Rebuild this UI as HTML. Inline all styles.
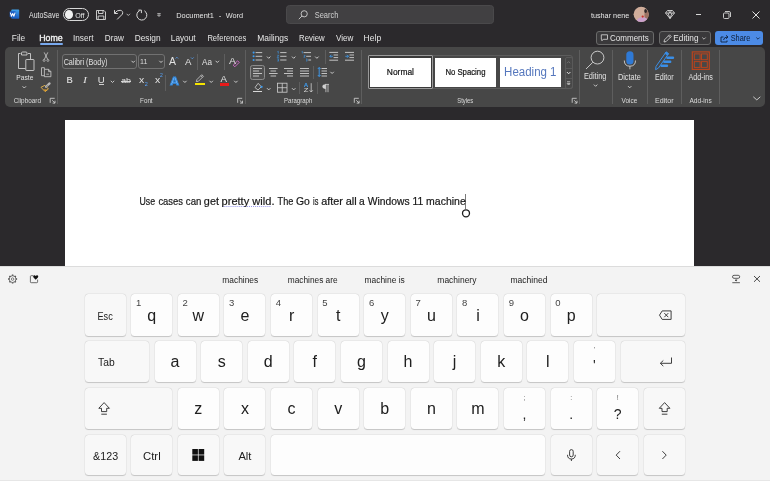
<!DOCTYPE html><html><head><meta charset="utf-8"><style>html,body{margin:0;padding:0;}
body{width:770px;height:481px;overflow:hidden;position:relative;background:#2b292c;font-family:'Liberation Sans', sans-serif;}
svg{display:block;}
</style></head><body>
<div style="position:absolute;left:5px;top:47px;width:760.00px;height:60.00px;background:#474747;border-radius:5px;"></div>
<div style="position:absolute;left:65px;top:120px;width:629.00px;height:146.00px;background:#ffffff;"></div>
<div style="position:absolute;left:0px;top:265.5px;width:770.00px;height:215.50px;background:#f3f3f3;border-top:1px solid #dcdcdc;box-sizing:border-box;"></div>
<div style="position:absolute;left:63px;top:8px;width:25.50px;height:12.50px;border:1px solid #d8d8d8;border-radius:7px;box-sizing:border-box;"></div>
<div style="position:absolute;left:65px;top:10px;width:8.00px;height:8.50px;background:#f0f0f0;border-radius:50%;"></div>
<svg style="position:absolute;left:96px;top:10px;overflow:visible;" width="10" height="10" viewBox="0 0 10 10" fill="none"><path d="M0.5 0.5 H8 L9.5 2 V9.5 H0.5 Z" stroke="#d8d8d8" stroke-width="0.9"/><path d="M2.5 0.5 V3.5 H7 V0.5" stroke="#d8d8d8" stroke-width="0.9"/><path d="M2.2 9.5 V6 H7.8 V9.5" stroke="#d8d8d8" stroke-width="0.9"/></svg>
<div style="position:absolute;left:285.7px;top:5px;width:208.60px;height:19.00px;background:#414042;border-radius:3.5px;border:1px solid #4a494b;box-sizing:border-box;"></div>
<svg style="position:absolute;left:298px;top:9.5px;overflow:visible;" width="10" height="10" viewBox="0 0 10 10" fill="none"><circle cx="6.2" cy="3.8" r="3.1" stroke="#cfcfcf" stroke-width="0.9"/><path d="M4 6 L0.8 9.2" stroke="#cfcfcf" stroke-width="0.9"/></svg>
<svg style="position:absolute;left:664.5px;top:10px;overflow:visible;" width="10" height="9" viewBox="0 0 10 9" fill="none"><path d="M0.5 3 L2.5 0.5 H7.5 L9.5 3 L5 8.5 Z M0.5 3 H9.5 M3.5 0.5 L5 3 L6.5 0.5 M3 3 L5 8.5 L7 3" stroke="#e6e6e6" stroke-width="0.8" stroke-linejoin="round"/></svg>
<div style="position:absolute;left:695.5px;top:14px;width:5.50px;height:1.00px;background:#d8d8d8;"></div>
<svg style="position:absolute;left:723px;top:11px;overflow:visible;" width="8" height="8" viewBox="0 0 8 8" fill="none"><rect x="0.5" y="2" width="5.5" height="5.5" rx="1" stroke="#d8d8d8" stroke-width="0.9"/><path d="M2 0.5 H6 Q7.5 0.5 7.5 2 V6" stroke="#d8d8d8" stroke-width="0.9"/></svg>
<svg style="position:absolute;left:752px;top:11px;overflow:visible;" width="8" height="8" viewBox="0 0 8 8" fill="none"><path d="M0.5 0.5 L7.5 7.5 M7.5 0.5 L0.5 7.5" stroke="#e0e0e0" stroke-width="1"/></svg>
<div style="position:absolute;left:40px;top:43.4px;width:22.50px;height:1.50px;background:#79a9ee;border-radius:1px;"></div>
<div style="position:absolute;left:596px;top:30.6px;width:58.00px;height:14.40px;border:1px solid #6a6a6a;border-radius:3px;box-sizing:border-box;background:#3a393b;"></div>
<div style="position:absolute;left:659px;top:30.6px;width:52.00px;height:14.40px;border:1px solid #6a6a6a;border-radius:3px;box-sizing:border-box;background:#3a393b;"></div>
<svg style="position:absolute;left:663px;top:33.5px;overflow:visible;" width="9" height="9" viewBox="0 0 9 9" fill="none"><path d="M1 8 L1.5 5.8 L6.5 0.8 L8.2 2.5 L3.2 7.5 Z M5.5 1.8 L7.2 3.5" stroke="#e0e0e0" stroke-width="0.8" stroke-linejoin="round"/></svg>
<svg style="position:absolute;left:701.5px;top:37px;overflow:visible;" width="4" height="3" viewBox="0 0 4 3" fill="none"><path d="M0.3 0.5 L2 2.2 L3.7 0.5" stroke="#d0d0d0" stroke-width="0.8"/></svg>
<div style="position:absolute;left:715.3px;top:30.6px;width:47.90px;height:14.40px;background:#4c8be6;border-radius:3px;"></div>
<svg style="position:absolute;left:720px;top:33.5px;overflow:visible;" width="9" height="9" viewBox="0 0 9 9" fill="none"><path d="M3.5 3 H1 V8 H7 V6.5" stroke="#10213c" stroke-width="0.9"/><path d="M3.5 6 Q4 3 7.5 3 M6 1.3 L8 3 L6 4.8" stroke="#10213c" stroke-width="0.9"/></svg>
<svg style="position:absolute;left:756px;top:37px;overflow:visible;" width="4" height="3" viewBox="0 0 4 3" fill="none"><path d="M0.3 0.5 L2 2.2 L3.7 0.5" stroke="#0f1f38" stroke-width="0.8"/></svg>
<div style="position:absolute;left:57.0px;top:50px;width:1.00px;height:54.00px;background:#5e5e5e;"></div>
<div style="position:absolute;left:62.1px;top:54.2px;width:74.70px;height:14.60px;border:1px solid #717171;border-radius:3px;box-sizing:border-box;"></div>
<div style="position:absolute;left:138.1px;top:54.2px;width:26.50px;height:14.60px;border:1px solid #717171;border-radius:3px;box-sizing:border-box;"></div>
<div style="position:absolute;left:197.0px;top:53.5px;width:1.00px;height:16.00px;background:#5e5e5e;"></div>
<div style="position:absolute;left:224.0px;top:53.5px;width:1.00px;height:16.00px;background:#5e5e5e;"></div>
<div style="position:absolute;left:98.5px;top:84.2px;width:5.50px;height:0.80px;background:#cfcfcf;"></div>
<div style="position:absolute;left:120.8px;top:80.8px;width:10.70px;height:0.80px;background:#cfcfcf;"></div>
<div style="position:absolute;left:165.0px;top:75px;width:1.00px;height:16.00px;background:#5e5e5e;"></div>
<div style="position:absolute;left:194.8px;top:83.1px;width:9.90px;height:2.40px;background:#f5e400;"></div>
<div style="position:absolute;left:219.5px;top:83.3px;width:9.80px;height:2.50px;background:#e81a1a;"></div>
<div style="position:absolute;left:244.8px;top:50px;width:1.00px;height:54.00px;background:#5e5e5e;"></div>
<div style="position:absolute;left:324.9px;top:49.5px;width:1.00px;height:14.50px;background:#5e5e5e;"></div>
<div style="position:absolute;left:250px;top:65px;width:14.80px;height:14.50px;border:1px solid #8c8c8c;border-radius:2.5px;box-sizing:border-box;background:#505050;"></div>
<div style="position:absolute;left:312.8px;top:65.5px;width:1.00px;height:13.50px;background:#5e5e5e;"></div>
<div style="position:absolute;left:253px;top:90.5px;width:9.00px;height:1.90px;background:#d8d8d8;"></div>
<div style="position:absolute;left:299.0px;top:81.5px;width:1.00px;height:12.50px;background:#5e5e5e;"></div>
<div style="position:absolute;left:317.0px;top:81.5px;width:1.00px;height:12.50px;background:#5e5e5e;"></div>
<div style="position:absolute;left:361.0px;top:50px;width:1.00px;height:54.00px;background:#5e5e5e;"></div>
<div style="position:absolute;left:368px;top:54.6px;width:205.00px;height:34.80px;border:1px solid #5c5c5c;border-radius:3px;box-sizing:border-box;"></div>
<div style="position:absolute;left:368.2px;top:55px;width:64.60px;height:34.20px;border:1.2px solid #9a9a9a;border-radius:1px;box-sizing:border-box;background:#3a3a3a;"></div>
<div style="position:absolute;left:370.2px;top:57.6px;width:61.10px;height:29.20px;background:#ffffff;"></div>
<div style="position:absolute;left:435.3px;top:57.6px;width:60.80px;height:29.20px;background:#ffffff;"></div>
<div style="position:absolute;left:500.3px;top:57.6px;width:60.70px;height:29.20px;background:#ffffff;"></div>
<div style="position:absolute;left:564.7px;top:57px;width:7.90px;height:32.00px;border:1px solid #595959;border-radius:2px;box-sizing:border-box;"></div>
<div style="position:absolute;left:564.7px;top:67.5px;width:7.90px;height:0.80px;background:#595959;"></div>
<div style="position:absolute;left:564.7px;top:78px;width:7.90px;height:0.80px;background:#595959;"></div>
<div style="position:absolute;left:578.9px;top:50px;width:1.00px;height:54.00px;background:#5e5e5e;"></div>
<div style="position:absolute;left:611.9px;top:50px;width:1.00px;height:54.00px;background:#5e5e5e;"></div>
<div style="position:absolute;left:646.5px;top:50px;width:1.00px;height:54.00px;background:#5e5e5e;"></div>
<div style="position:absolute;left:681.2px;top:50px;width:1.00px;height:54.00px;background:#5e5e5e;"></div>
<div style="position:absolute;left:719.2px;top:50px;width:1.00px;height:54.00px;background:#5e5e5e;"></div>
<div style="position:absolute;left:465.4px;top:194.3px;width:1.10px;height:15.20px;background:#7a7a7a;"></div>
<div style="position:absolute;left:0px;top:479.6px;width:770.00px;height:1.40px;background:#e6e6e6;"></div>
<div style="position:absolute;left:84.6px;top:294.3px;width:41.10px;height:41.60px;background:#f8f8f8;border-radius:3.5px;box-shadow:0 0.8px 0.8px rgba(0,0,0,0.17),0 0 0 0.5px rgba(0,0,0,0.06);"></div>
<div style="position:absolute;left:131.2px;top:294.3px;width:41.10px;height:41.60px;background:#fdfdfd;border-radius:3.5px;box-shadow:0 0.8px 0.8px rgba(0,0,0,0.17),0 0 0 0.5px rgba(0,0,0,0.06);"></div>
<div style="position:absolute;left:177.8px;top:294.3px;width:41.10px;height:41.60px;background:#fdfdfd;border-radius:3.5px;box-shadow:0 0.8px 0.8px rgba(0,0,0,0.17),0 0 0 0.5px rgba(0,0,0,0.06);"></div>
<div style="position:absolute;left:224.4px;top:294.3px;width:41.10px;height:41.60px;background:#fdfdfd;border-radius:3.5px;box-shadow:0 0.8px 0.8px rgba(0,0,0,0.17),0 0 0 0.5px rgba(0,0,0,0.06);"></div>
<div style="position:absolute;left:271.0px;top:294.3px;width:41.10px;height:41.60px;background:#fdfdfd;border-radius:3.5px;box-shadow:0 0.8px 0.8px rgba(0,0,0,0.17),0 0 0 0.5px rgba(0,0,0,0.06);"></div>
<div style="position:absolute;left:317.6px;top:294.3px;width:41.10px;height:41.60px;background:#fdfdfd;border-radius:3.5px;box-shadow:0 0.8px 0.8px rgba(0,0,0,0.17),0 0 0 0.5px rgba(0,0,0,0.06);"></div>
<div style="position:absolute;left:364.20000000000005px;top:294.3px;width:41.10px;height:41.60px;background:#fdfdfd;border-radius:3.5px;box-shadow:0 0.8px 0.8px rgba(0,0,0,0.17),0 0 0 0.5px rgba(0,0,0,0.06);"></div>
<div style="position:absolute;left:410.79999999999995px;top:294.3px;width:41.10px;height:41.60px;background:#fdfdfd;border-radius:3.5px;box-shadow:0 0.8px 0.8px rgba(0,0,0,0.17),0 0 0 0.5px rgba(0,0,0,0.06);"></div>
<div style="position:absolute;left:457.4px;top:294.3px;width:41.10px;height:41.60px;background:#fdfdfd;border-radius:3.5px;box-shadow:0 0.8px 0.8px rgba(0,0,0,0.17),0 0 0 0.5px rgba(0,0,0,0.06);"></div>
<div style="position:absolute;left:504.0px;top:294.3px;width:41.10px;height:41.60px;background:#fdfdfd;border-radius:3.5px;box-shadow:0 0.8px 0.8px rgba(0,0,0,0.17),0 0 0 0.5px rgba(0,0,0,0.06);"></div>
<div style="position:absolute;left:550.6px;top:294.3px;width:41.10px;height:41.60px;background:#fdfdfd;border-radius:3.5px;box-shadow:0 0.8px 0.8px rgba(0,0,0,0.17),0 0 0 0.5px rgba(0,0,0,0.06);"></div>
<div style="position:absolute;left:597.2px;top:294.3px;width:87.70px;height:41.60px;background:#f8f8f8;border-radius:3.5px;box-shadow:0 0.8px 0.8px rgba(0,0,0,0.17),0 0 0 0.5px rgba(0,0,0,0.06);"></div>
<div style="position:absolute;left:84.6px;top:340.8px;width:64.40px;height:41.60px;background:#f8f8f8;border-radius:3.5px;box-shadow:0 0.8px 0.8px rgba(0,0,0,0.17),0 0 0 0.5px rgba(0,0,0,0.06);"></div>
<div style="position:absolute;left:154.5px;top:340.8px;width:41.10px;height:41.60px;background:#fdfdfd;border-radius:3.5px;box-shadow:0 0.8px 0.8px rgba(0,0,0,0.17),0 0 0 0.5px rgba(0,0,0,0.06);"></div>
<div style="position:absolute;left:201.1px;top:340.8px;width:41.10px;height:41.60px;background:#fdfdfd;border-radius:3.5px;box-shadow:0 0.8px 0.8px rgba(0,0,0,0.17),0 0 0 0.5px rgba(0,0,0,0.06);"></div>
<div style="position:absolute;left:247.7px;top:340.8px;width:41.10px;height:41.60px;background:#fdfdfd;border-radius:3.5px;box-shadow:0 0.8px 0.8px rgba(0,0,0,0.17),0 0 0 0.5px rgba(0,0,0,0.06);"></div>
<div style="position:absolute;left:294.3px;top:340.8px;width:41.10px;height:41.60px;background:#fdfdfd;border-radius:3.5px;box-shadow:0 0.8px 0.8px rgba(0,0,0,0.17),0 0 0 0.5px rgba(0,0,0,0.06);"></div>
<div style="position:absolute;left:340.9px;top:340.8px;width:41.10px;height:41.60px;background:#fdfdfd;border-radius:3.5px;box-shadow:0 0.8px 0.8px rgba(0,0,0,0.17),0 0 0 0.5px rgba(0,0,0,0.06);"></div>
<div style="position:absolute;left:387.5px;top:340.8px;width:41.10px;height:41.60px;background:#fdfdfd;border-radius:3.5px;box-shadow:0 0.8px 0.8px rgba(0,0,0,0.17),0 0 0 0.5px rgba(0,0,0,0.06);"></div>
<div style="position:absolute;left:434.1px;top:340.8px;width:41.10px;height:41.60px;background:#fdfdfd;border-radius:3.5px;box-shadow:0 0.8px 0.8px rgba(0,0,0,0.17),0 0 0 0.5px rgba(0,0,0,0.06);"></div>
<div style="position:absolute;left:480.70000000000005px;top:340.8px;width:41.10px;height:41.60px;background:#fdfdfd;border-radius:3.5px;box-shadow:0 0.8px 0.8px rgba(0,0,0,0.17),0 0 0 0.5px rgba(0,0,0,0.06);"></div>
<div style="position:absolute;left:527.3px;top:340.8px;width:41.10px;height:41.60px;background:#fdfdfd;border-radius:3.5px;box-shadow:0 0.8px 0.8px rgba(0,0,0,0.17),0 0 0 0.5px rgba(0,0,0,0.06);"></div>
<div style="position:absolute;left:573.9px;top:340.8px;width:41.10px;height:41.60px;background:#fdfdfd;border-radius:3.5px;box-shadow:0 0.8px 0.8px rgba(0,0,0,0.17),0 0 0 0.5px rgba(0,0,0,0.06);"></div>
<div style="position:absolute;left:620.5px;top:340.8px;width:64.40px;height:41.60px;background:#f8f8f8;border-radius:3.5px;box-shadow:0 0.8px 0.8px rgba(0,0,0,0.17),0 0 0 0.5px rgba(0,0,0,0.06);"></div>
<div style="position:absolute;left:84.6px;top:387.6px;width:87.70px;height:41.40px;background:#f8f8f8;border-radius:3.5px;box-shadow:0 0.8px 0.8px rgba(0,0,0,0.17),0 0 0 0.5px rgba(0,0,0,0.06);"></div>
<div style="position:absolute;left:177.8px;top:387.6px;width:41.10px;height:41.40px;background:#fdfdfd;border-radius:3.5px;box-shadow:0 0.8px 0.8px rgba(0,0,0,0.17),0 0 0 0.5px rgba(0,0,0,0.06);"></div>
<div style="position:absolute;left:224.4px;top:387.6px;width:41.10px;height:41.40px;background:#fdfdfd;border-radius:3.5px;box-shadow:0 0.8px 0.8px rgba(0,0,0,0.17),0 0 0 0.5px rgba(0,0,0,0.06);"></div>
<div style="position:absolute;left:271.0px;top:387.6px;width:41.10px;height:41.40px;background:#fdfdfd;border-radius:3.5px;box-shadow:0 0.8px 0.8px rgba(0,0,0,0.17),0 0 0 0.5px rgba(0,0,0,0.06);"></div>
<div style="position:absolute;left:317.6px;top:387.6px;width:41.10px;height:41.40px;background:#fdfdfd;border-radius:3.5px;box-shadow:0 0.8px 0.8px rgba(0,0,0,0.17),0 0 0 0.5px rgba(0,0,0,0.06);"></div>
<div style="position:absolute;left:364.20000000000005px;top:387.6px;width:41.10px;height:41.40px;background:#fdfdfd;border-radius:3.5px;box-shadow:0 0.8px 0.8px rgba(0,0,0,0.17),0 0 0 0.5px rgba(0,0,0,0.06);"></div>
<div style="position:absolute;left:410.79999999999995px;top:387.6px;width:41.10px;height:41.40px;background:#fdfdfd;border-radius:3.5px;box-shadow:0 0.8px 0.8px rgba(0,0,0,0.17),0 0 0 0.5px rgba(0,0,0,0.06);"></div>
<div style="position:absolute;left:457.4px;top:387.6px;width:41.10px;height:41.40px;background:#fdfdfd;border-radius:3.5px;box-shadow:0 0.8px 0.8px rgba(0,0,0,0.17),0 0 0 0.5px rgba(0,0,0,0.06);"></div>
<div style="position:absolute;left:504.0px;top:387.6px;width:41.10px;height:41.40px;background:#fdfdfd;border-radius:3.5px;box-shadow:0 0.8px 0.8px rgba(0,0,0,0.17),0 0 0 0.5px rgba(0,0,0,0.06);"></div>
<div style="position:absolute;left:550.6px;top:387.6px;width:41.10px;height:41.40px;background:#fdfdfd;border-radius:3.5px;box-shadow:0 0.8px 0.8px rgba(0,0,0,0.17),0 0 0 0.5px rgba(0,0,0,0.06);"></div>
<div style="position:absolute;left:597.2px;top:387.6px;width:41.10px;height:41.40px;background:#fdfdfd;border-radius:3.5px;box-shadow:0 0.8px 0.8px rgba(0,0,0,0.17),0 0 0 0.5px rgba(0,0,0,0.06);"></div>
<div style="position:absolute;left:643.8000000000001px;top:387.6px;width:41.10px;height:41.40px;background:#f8f8f8;border-radius:3.5px;box-shadow:0 0.8px 0.8px rgba(0,0,0,0.17),0 0 0 0.5px rgba(0,0,0,0.06);"></div>
<div style="position:absolute;left:84.6px;top:434.6px;width:41.10px;height:40.60px;background:#f8f8f8;border-radius:3.5px;box-shadow:0 0.8px 0.8px rgba(0,0,0,0.17),0 0 0 0.5px rgba(0,0,0,0.06);"></div>
<div style="position:absolute;left:131.2px;top:434.6px;width:41.10px;height:40.60px;background:#f8f8f8;border-radius:3.5px;box-shadow:0 0.8px 0.8px rgba(0,0,0,0.17),0 0 0 0.5px rgba(0,0,0,0.06);"></div>
<div style="position:absolute;left:177.8px;top:434.6px;width:41.10px;height:40.60px;background:#f8f8f8;border-radius:3.5px;box-shadow:0 0.8px 0.8px rgba(0,0,0,0.17),0 0 0 0.5px rgba(0,0,0,0.06);"></div>
<div style="position:absolute;left:224.4px;top:434.6px;width:41.10px;height:40.60px;background:#f8f8f8;border-radius:3.5px;box-shadow:0 0.8px 0.8px rgba(0,0,0,0.17),0 0 0 0.5px rgba(0,0,0,0.06);"></div>
<div style="position:absolute;left:271.0px;top:434.6px;width:274.10px;height:40.60px;background:#fdfdfd;border-radius:3.5px;box-shadow:0 0.8px 0.8px rgba(0,0,0,0.17),0 0 0 0.5px rgba(0,0,0,0.06);"></div>
<div style="position:absolute;left:550.6px;top:434.6px;width:41.10px;height:40.60px;background:#f8f8f8;border-radius:3.5px;box-shadow:0 0.8px 0.8px rgba(0,0,0,0.17),0 0 0 0.5px rgba(0,0,0,0.06);"></div>
<div style="position:absolute;left:597.2px;top:434.6px;width:41.10px;height:40.60px;background:#f8f8f8;border-radius:3.5px;box-shadow:0 0.8px 0.8px rgba(0,0,0,0.17),0 0 0 0.5px rgba(0,0,0,0.06);"></div>
<div style="position:absolute;left:643.8000000000001px;top:434.6px;width:41.10px;height:40.60px;background:#f8f8f8;border-radius:3.5px;box-shadow:0 0.8px 0.8px rgba(0,0,0,0.17),0 0 0 0.5px rgba(0,0,0,0.06);"></div>
<svg style="position:absolute;left:0;top:0" width="770" height="481" fill="none"><defs><linearGradient id="wg" x1="0" y1="0" x2="0" y2="1"><stop offset="0" stop-color="#41a5ee"/><stop offset="0.5" stop-color="#2b7cd3"/><stop offset="1" stop-color="#185abd"/></linearGradient></defs><rect x="11.3" y="9.5" width="7.9" height="9.3" rx="0.9" fill="url(#wg)"/><rect x="9.7" y="11.3" width="6" height="6" rx="0.8" fill="#1b5fc4"/><path d="M10.3 12.6 L11.5 16.2 L12.7 13.5 L13.9 16.2 L15.1 12.6" stroke="#fff" stroke-width="1.05" stroke-linejoin="round"/>
<path d="M114.7 13.2 Q117 10 120.2 10.3 Q123.6 10.9 122.4 14.1 L117.2 19.4" stroke="#d8d8d8" stroke-width="1"/><path d="M114.5 10.1 V13.5 H117.8" stroke="#d8d8d8" stroke-width="1"/>
<path d="M126.6 13.8 L128.3 15.5 L130 13.8" stroke="#d0d0d0" stroke-width="0.8"/>
<path d="M144.4 10.8 A5 5 0 1 1 139.8 10.5" stroke="#d8d8d8" stroke-width="1"/><path d="M138.4 10.1 H141.4 V13.1" stroke="#d8d8d8" stroke-width="1"/>
<path d="M157.3 13.6 H160.7 M157.6 15 H160.4 L159 16.5 Z" stroke="#cfcfcf" stroke-width="0.8" stroke-linejoin="round"/>
<defs><clipPath id="av"><circle cx="641.2" cy="14.3" r="7.6"/></clipPath></defs><g clip-path="url(#av)"><rect x="633" y="6" width="17" height="17" fill="#d0ad9b"/><ellipse cx="647" cy="15" rx="2.6" ry="4.5" fill="#9c7264"/><ellipse cx="645.6" cy="11" rx="1.4" ry="2" fill="#2e2628"/><ellipse cx="642.5" cy="20.5" rx="5.5" ry="3.2" fill="#caa0cc"/><circle cx="642.7" cy="16.6" r="1.1" fill="#c8302c"/></g>
<path d="M601.3 34.8 H607.5 V39.3 H603.3 L601.9 40.8 V39.3 H601.3 Z" stroke="#dcdcdc" stroke-width="0.8" stroke-linejoin="round"/>
<path d="M20.5 53.5 H18.5 V68.5 H25.5 M28 53.5 H30.5 V59" stroke="#cfcfcf" stroke-width="0.9"/><path d="M21.5 55 V53 Q21.5 52 22.5 52 H26 Q27 52 27 53 V55 Z" stroke="#cfcfcf" stroke-width="0.9"/><rect x="25.8" y="59.5" width="8.2" height="11" rx="0.5" stroke="#cfcfcf" stroke-width="0.9"/>
<path d="M22.6 86.3 L24.3 88.0 L26.0 86.3" stroke="#d0d0d0" stroke-width="0.95"/>
<path d="M44.2 52.4 L47.6 59.2 M47.8 52.4 L44.4 59.2" stroke="#cfcfcf" stroke-width="0.8"/><circle cx="44.1" cy="60.4" r="1" stroke="#cfcfcf" stroke-width="0.7"/><circle cx="47.9" cy="60.4" r="1" stroke="#cfcfcf" stroke-width="0.7"/>
<path d="M44.4 69.3 V67.7 H41.5 V75.7 H44.2" stroke="#cfcfcf" stroke-width="0.8"/><path d="M44.4 69.3 H48.6 L50.9 71.6 V76.7 H44.4 Z M48.6 69.3 V71.6 H50.9" stroke="#cfcfcf" stroke-width="0.8" stroke-linejoin="round"/><path d="M46.3 74.2 H49" stroke="#cfcfcf" stroke-width="0.7"/>
<path d="M41 87.3 L44.9 85.3 L48.4 89 L45.1 91.6 Z" stroke="#e8b64a" stroke-width="0.9" stroke-linejoin="round"/><path d="M43.6 89.4 L47.2 89.4 L45.2 91.2 Z" fill="#f0a020"/><path d="M46 86.8 L49.6 83.4" stroke="#b8b8b8" stroke-width="2.2" stroke-linecap="round"/><path d="M45.8 85.6 L47.2 87 M46.9 84.6 L48.2 86" stroke="#5a5a5a" stroke-width="0.5"/>
<path d="M50.2 102.8 V98.3 H54.7" stroke="#c8c8c8" stroke-width="0.9"/><path d="M52.2 100.3 L55.0 103.1 M55.0 100.7 V103.1 H52.6" stroke="#c8c8c8" stroke-width="0.9"/>
<path d="M131.5 60.8 L133.2 62.5 L134.9 60.8" stroke="#d0d0d0" stroke-width="0.95"/>
<path d="M159.3 60.8 L161.0 62.5 L162.70000000000002 60.8" stroke="#d0d0d0" stroke-width="0.95"/>
<path d="M175.6 58.6 L176.9 57.2 L178.2 58.6" stroke="#58a6ff" stroke-width="0.7"/>
<path d="M190.9 57.4 L192.3 58.8 L193.7 57.4" stroke="#58a6ff" stroke-width="0.7"/>
<path d="M215.6 60.8 L217.29999999999998 62.5 L219.0 60.8" stroke="#d0d0d0" stroke-width="0.95"/>
<path d="M233.2 65.2 L237.6 60.8 L239.2 62.4 L234.8 66.8 Z" stroke="#d86bd0" stroke-width="0.9" stroke-linejoin="round"/>
<path d="M110.8 80.8 L112.5 82.5 L114.2 80.8" stroke="#d0d0d0" stroke-width="0.95"/>
<path d="M183.2 80.8 L184.89999999999998 82.5 L186.6 80.8" stroke="#d0d0d0" stroke-width="0.95"/>
<path d="M196.3 81.6 L196.9 79.6 L201.8 74.7 L203.4 76.3 L198.5 81.2 Z M200.8 75.7 L202.4 77.3" stroke="#cfcfcf" stroke-width="0.8" stroke-linejoin="round"/>
<path d="M209.5 80.8 L211.2 82.5 L212.9 80.8" stroke="#d0d0d0" stroke-width="0.95"/>
<path d="M234.2 80.8 L235.89999999999998 82.5 L237.6 80.8" stroke="#d0d0d0" stroke-width="0.95"/>
<path d="M237.7 102.8 V98.3 H242.2" stroke="#c8c8c8" stroke-width="0.9"/><path d="M239.7 100.3 L242.5 103.1 M242.5 100.7 V103.1 H240.1" stroke="#c8c8c8" stroke-width="0.9"/>
<circle cx="253.6" cy="52.6" r="1.05" fill="#3d9cf0"/>
<circle cx="253.6" cy="56.3" r="1.05" fill="#3d9cf0"/>
<circle cx="253.6" cy="60" r="1.05" fill="#3d9cf0"/>
<path d="M255.6 52.6 H262.2 M255.6 56.3 H262.2 M255.6 60 H262.2 " stroke="#d0d0d0" stroke-width="0.9"/>
<path d="M267 56.6 L268.7 58.300000000000004 L270.4 56.6" stroke="#d0d0d0" stroke-width="0.95"/>
<path d="M277.3 51.8 L278.3 51.3 V53.6" stroke="#3d9cf0" stroke-width="0.6"/><path d="M277.2 55.3 H278.8 L277.2 57.4 H278.9" stroke="#3d9cf0" stroke-width="0.6"/><path d="M277.2 58.9 H278.8 L278 60 L278.9 61 H277.2" stroke="#3d9cf0" stroke-width="0.6"/>
<path d="M280.2 52.6 H286.5 M280.2 56.3 H286.5 M280.2 60 H286.5 " stroke="#d0d0d0" stroke-width="0.9"/>
<path d="M292 56.6 L293.7 58.300000000000004 L295.4 56.6" stroke="#d0d0d0" stroke-width="0.95"/>
<path d="M301.6 51.8 L302.4 51.4 V53.4" stroke="#3d9cf0" stroke-width="0.6"/><path d="M303.8 55.3 H305.2 L303.8 57.2 H305.3" stroke="#3d9cf0" stroke-width="0.6"/><path d="M306 59 H307.3 L306.7 60 L307.3 61 H306" stroke="#3d9cf0" stroke-width="0.6"/>
<path d="M303.6 52.6 H311.0 " stroke="#d0d0d0" stroke-width="0.9"/>
<path d="M306.2 56.3 H311.0 " stroke="#d0d0d0" stroke-width="0.9"/>
<path d="M308.3 60 H311.1 " stroke="#d0d0d0" stroke-width="0.9"/>
<path d="M315.2 56.6 L316.9 58.300000000000004 L318.59999999999997 56.6" stroke="#d0d0d0" stroke-width="0.95"/>
<path d="M329.3 52.4 H338.1 M329.3 60.2 H338.1 " stroke="#d0d0d0" stroke-width="0.9"/>
<path d="M333.6 55 H338.1 M333.6 57.6 H338.1 " stroke="#d0d0d0" stroke-width="0.9"/>
<path d="M333 56.3 H329.8 M331.3 54.8 L329.8 56.3 L331.3 57.8" stroke="#3d9cf0" stroke-width="0.8"/>
<path d="M345 52.4 H354 M345 60.2 H354 " stroke="#d0d0d0" stroke-width="0.9"/>
<path d="M349.5 55 H354.0 M349.5 57.6 H354.0 " stroke="#d0d0d0" stroke-width="0.9"/>
<path d="M345.3 56.3 H348.5 M347 54.8 L348.5 56.3 L347 57.8" stroke="#3d9cf0" stroke-width="0.8"/>
<path d="M253 68.5 H262 M253 71 H259 M253 73.5 H262 M253 76 H259 " stroke="#d0d0d0" stroke-width="0.9"/>
<path d="M269 68.5 H277.6 M270.5 71 H276.1 M269 73.5 H277.6 M270.5 76 H276.1" stroke="#d0d0d0" stroke-width="0.9"/>
<path d="M284 68.5 H293 M287 71 H293 M284 73.5 H293 M287 76 H293 " stroke="#d0d0d0" stroke-width="0.9"/>
<path d="M300 68.5 H309 M300 71 H309 M300 73.5 H309 M300 76 H309 " stroke="#d0d0d0" stroke-width="0.9"/>
<path d="M319.2 67.5 V76.5 M317.8 69 L319.2 67.5 L320.6 69 M317.8 75 L319.2 76.5 L320.6 75" stroke="#3d9cf0" stroke-width="0.9"/>
<path d="M321.5 68.5 H327.0 M321.5 71 H327.0 M321.5 73.5 H327.0 M321.5 76 H327.0 " stroke="#d0d0d0" stroke-width="0.9"/>
<path d="M330.4 71.8 L332.09999999999997 73.5 L333.79999999999995 71.8" stroke="#d0d0d0" stroke-width="0.95"/>
<path d="M255 87.5 L258.2 83.3 L261.3 86.8 L258 90 Z" stroke="#d0d0d0" stroke-width="0.8" stroke-linejoin="round"/><circle cx="261.6" cy="86.8" r="1.1" fill="#3d9cf0"/>
<path d="M267 88.2 L268.7 89.9 L270.4 88.2" stroke="#d0d0d0" stroke-width="0.95"/>
<rect x="277.5" y="83.2" width="9.5" height="9" stroke="#d0d0d0" stroke-width="0.8"/><path d="M282.25 83.2 V92.2 M277.5 87.7 H287" stroke="#d0d0d0" stroke-width="0.8"/>
<path d="M292 88.2 L293.7 89.9 L295.4 88.2" stroke="#d0d0d0" stroke-width="0.95"/>
<path d="M311.2 83.2 V92 M309.6 90.3 L311.2 92 L312.8 90.3" stroke="#d0d0d0" stroke-width="0.8"/>
<path d="M325.9 84.4 V92.2 M328 84.4 V92.2 M325 84.4 H329" stroke="#d0d0d0" stroke-width="0.8"/><path d="M325.9 84.3 Q322.4 84.3 322.4 86.6 Q322.4 88.9 325.9 88.9 Z" fill="#d0d0d0"/>
<path d="M354.3 102.8 V98.3 H358.8" stroke="#c8c8c8" stroke-width="0.9"/><path d="M356.3 100.3 L359.1 103.1 M359.1 100.7 V103.1 H356.7" stroke="#c8c8c8" stroke-width="0.9"/>
<path d="M567 63.2 L568.6 61.6 L570.2 63.2" stroke="#7a7a7a" stroke-width="0.8"/>
<path d="M566.9 72 L568.65 73.8 L570.4 72" stroke="#e0e0e0" stroke-width="1"/>
<path d="M567 81.8 H570.2 M567.2 83.6 L568.6 85 L570 83.6 Z" stroke="#d0d0d0" stroke-width="0.8"/>
<path d="M572.2 102.8 V98.3 H576.7" stroke="#c8c8c8" stroke-width="0.9"/><path d="M574.2 100.3 L577.0 103.1 M577.0 100.7 V103.1 H574.6" stroke="#c8c8c8" stroke-width="0.9"/>
<circle cx="597.5" cy="57.6" r="6.4" stroke="#d6d6d6" stroke-width="0.9"/><path d="M592.8 62.3 L586 69" stroke="#d6d6d6" stroke-width="0.9"/>
<path d="M593.9 84.6 L595.6 86.3 L597.3 84.6" stroke="#d0d0d0" stroke-width="0.95"/>
<rect x="626.3" y="51.2" width="7.2" height="13.4" rx="3.6" fill="#2f7ad6"/><path d="M624.3 60.5 Q624.3 66.2 629.9 66.2 Q635.5 66.2 635.5 60.5 M629.9 66.2 V69.3" stroke="#d0d0d0" stroke-width="0.9"/>
<path d="M628 86.1 L629.7 87.8 L631.4 86.1" stroke="#d0d0d0" stroke-width="0.95"/>
<path d="M655.6 69.7 L656.0 66.45 L666.1 51.95 L668.5 53.65 L658.4 68.15 Z" stroke="#3a8ee6" stroke-width="1" stroke-linejoin="round"/><path d="M666.1 51.95 L668.5 53.65 L667.4 55.2 L665.0 53.5 Z" fill="#3a8ee6" stroke="#3a8ee6" stroke-width="0.8"/><path d="M667.4 57.8 H673 M664.3 61.8 H670.2 M661.5 65.8 H667" stroke="#3a8ee6" stroke-width="2.4" stroke-linecap="round"/>
<rect x="692.3" y="51.9" width="17" height="17.5" stroke="#b8441d" stroke-width="1.2"/><rect x="694.3" y="53.9" width="5.8" height="5.8" stroke="#b8441d" stroke-width="1"/><rect x="701.5" y="53.9" width="5.8" height="5.8" stroke="#b8441d" stroke-width="1"/><rect x="694.3" y="61.6" width="5.8" height="5.8" stroke="#b8441d" stroke-width="1"/><rect x="701.5" y="61.6" width="5.8" height="5.8" stroke="#b8441d" stroke-width="1"/>
<path d="M753.3 96.8 L756.8 99.9 L760.3 96.8" stroke="#d0d0d0" stroke-width="0.95"/>
<path d="M222.3 206.5 H271.5" stroke="#6a6ae8" stroke-width="0.7" stroke-dasharray="1 1.05"/>
<circle cx="466" cy="213.3" r="3.5" stroke="#1e1e1e" stroke-width="1.3" fill="#fff"/>
<circle cx="12.6" cy="279.1" r="3.4" stroke="#505050" stroke-width="0.8"/><circle cx="12.6" cy="279.1" r="1.25" stroke="#505050" stroke-width="0.7"/><path d="M15.90 279.10 L17.10 279.10 M14.93 281.43 L15.78 282.28 M12.60 282.40 L12.60 283.60 M10.27 281.43 L9.42 282.28 M9.30 279.10 L8.10 279.10 M10.27 276.77 L9.42 275.92 M12.60 275.80 L12.60 274.60 M14.93 276.77 L15.78 275.92 " stroke="#505050" stroke-width="1.5"/>
<path d="M33 275.7 H31.2 Q30.4 275.7 30.4 276.5 V281.9 Q30.4 282.7 31.2 282.7 H36.8 Q37.6 282.7 37.6 281.9 V279.6" stroke="#555" stroke-width="0.85"/><path d="M35.7 279.7 L33.5 277.4 Q32.7 276.4 33.5 275.6 Q34.6 274.7 35.7 275.9 Q36.8 274.7 37.9 275.6 Q38.7 276.4 37.9 277.4 Z" fill="#111"/>
<rect x="732.5" y="275.3" width="7.2" height="3" rx="1.5" stroke="#333" stroke-width="0.8"/><path d="M736.1 279 V281 M735 280 L736.1 281 L737.2 280 M732.3 282.7 H739.9" stroke="#333" stroke-width="0.8"/>
<path d="M754 276 L760 281.8 M760 276 L754 281.8" stroke="#333" stroke-width="0.9"/>
<path d="M662.2 310.9 H671.1 V319.4 H662.2 L659.5 315.15 Z" stroke="#2a2a2a" stroke-width="0.9" stroke-linejoin="round"/><path d="M664.3 313.1 L668.3 317.2 M668.3 313.1 L664.3 317.2" stroke="#2a2a2a" stroke-width="0.9"/>
<path d="M671.5 357.5 V363.3 H660.5 M663.3 360.5 L660.3 363.3 L663.3 366.1" stroke="#2a2a2a" stroke-width="0.9"/>
<path d="M98.8 408.3 L104.1 402.6 L109.39999999999999 408.3 H106.69999999999999 V411.6 H101.5 V408.3 Z M101.3 414.2 H106.89999999999999" stroke="#2a2a2a" stroke-width="0.9" stroke-linejoin="round"/>
<path d="M659.3000000000001 408.3 L664.6 402.6 L669.9 408.3 H667.2 V411.6 H662.0 V408.3 Z M661.8000000000001 414.2 H667.4" stroke="#2a2a2a" stroke-width="0.9" stroke-linejoin="round"/>
<rect x="192.3" y="449" width="5.6" height="5.6" fill="#111"/><rect x="198.6" y="449" width="5.6" height="5.6" fill="#111"/><rect x="192.3" y="455.3" width="5.6" height="5.6" fill="#111"/><rect x="198.6" y="455.3" width="5.6" height="5.6" fill="#111"/>
<rect x="569.6" y="449.6" width="3.6" height="7.2" rx="1.8" stroke="#2a2a2a" stroke-width="0.9"/><path d="M567.5 454.8 Q567.5 459 571.4 459 Q575.3 459 575.3 454.8 M571.4 459 V461" stroke="#2a2a2a" stroke-width="0.9"/>
<path d="M620 451.2 L616.2 455.1 L620 459" stroke="#2a2a2a" stroke-width="0.9"/>
<path d="M662.4 451.2 L666.2 455.1 L662.4 459" stroke="#2a2a2a" stroke-width="0.9"/></svg>
<svg style="position:absolute;left:0;top:0;will-change:transform" width="770" height="481" font-family="Liberation Sans" xml:space="preserve"><text x="29.00" y="17.7" font-size="8.5" fill="#e6e6e6" textLength="30.29" lengthAdjust="spacingAndGlyphs" >AutoSave</text>
<text x="75.18" y="17.5" font-size="7.5" fill="#e6e6e6" textLength="9.30" lengthAdjust="spacingAndGlyphs" >Off</text>
<text x="176.21" y="17.7" font-size="8" fill="#e6e6e6" textLength="37.73" lengthAdjust="spacingAndGlyphs" >Document1</text>
<text x="218.68" y="17.7" font-size="8" fill="#e6e6e6" textLength="2.66" lengthAdjust="spacingAndGlyphs" >-</text>
<text x="225.70" y="17.7" font-size="8" fill="#e6e6e6" textLength="17.35" lengthAdjust="spacingAndGlyphs" >Word</text>
<text x="314.66" y="17.8" font-size="8.5" fill="#d0d0d0" textLength="23.80" lengthAdjust="spacingAndGlyphs" >Search</text>
<text x="590.89" y="17.8" font-size="7.5" fill="#e6e6e6" textLength="38.41" lengthAdjust="spacingAndGlyphs" >tushar nene</text>
<text x="11.83" y="41.4" font-size="9" fill="#e6e6e6" textLength="13.41" lengthAdjust="spacingAndGlyphs" >File</text>
<text x="39.20" y="41.4" font-size="9" fill="#f2f2f2" textLength="23.47" lengthAdjust="spacingAndGlyphs" stroke="#f2f2f2" stroke-width="0.35">Home</text>
<text x="73.06" y="41.4" font-size="9" fill="#e6e6e6" textLength="20.46" lengthAdjust="spacingAndGlyphs" >Insert</text>
<text x="104.84" y="41.4" font-size="9" fill="#e6e6e6" textLength="19.13" lengthAdjust="spacingAndGlyphs" >Draw</text>
<text x="134.74" y="41.4" font-size="9" fill="#e6e6e6" textLength="25.87" lengthAdjust="spacingAndGlyphs" >Design</text>
<text x="170.84" y="41.4" font-size="9" fill="#e6e6e6" textLength="24.68" lengthAdjust="spacingAndGlyphs" >Layout</text>
<text x="207.39" y="41.4" font-size="9" fill="#e6e6e6" textLength="38.87" lengthAdjust="spacingAndGlyphs" >References</text>
<text x="257.32" y="41.4" font-size="9" fill="#e6e6e6" textLength="30.97" lengthAdjust="spacingAndGlyphs" >Mailings</text>
<text x="299.08" y="41.4" font-size="9" fill="#e6e6e6" textLength="25.60" lengthAdjust="spacingAndGlyphs" >Review</text>
<text x="335.90" y="41.4" font-size="9" fill="#e6e6e6" textLength="17.38" lengthAdjust="spacingAndGlyphs" >View</text>
<text x="363.62" y="41.4" font-size="9" fill="#e6e6e6" textLength="17.53" lengthAdjust="spacingAndGlyphs" >Help</text>
<text x="610.10" y="41" font-size="9" fill="#e6e6e6" textLength="38.68" lengthAdjust="spacingAndGlyphs" >Comments</text>
<text x="673.34" y="41" font-size="9" fill="#e6e6e6" textLength="25.16" lengthAdjust="spacingAndGlyphs" >Editing</text>
<text x="730.67" y="41" font-size="9" fill="#0f1f38" textLength="19.63" lengthAdjust="spacingAndGlyphs" >Share</text>
<text x="16.37" y="79.9" font-size="8" fill="#e2e2e2" textLength="17.01" lengthAdjust="spacingAndGlyphs" >Paste</text>
<text x="13.68" y="102.6" font-size="7" fill="#dcdcdc" textLength="27.31" lengthAdjust="spacingAndGlyphs" >Clipboard</text>
<text x="63.64" y="64.6" font-size="8.5" fill="#e2e2e2" textLength="43.78" lengthAdjust="spacingAndGlyphs" >Calibri (Body)</text>
<text x="139.97" y="64.1" font-size="8" fill="#dadada" textLength="7.36" lengthAdjust="spacingAndGlyphs" >11</text>
<text x="169.00" y="64.8" font-size="10" fill="#e2e2e2" textLength="6.97" lengthAdjust="spacingAndGlyphs" >A</text>
<text x="185.00" y="64.8" font-size="9" fill="#e2e2e2" textLength="6.47" lengthAdjust="spacingAndGlyphs" >A</text>
<text x="202.00" y="64.8" font-size="9" fill="#e2e2e2" textLength="9.97" lengthAdjust="spacingAndGlyphs" >Aa</text>
<text x="229.00" y="63.5" font-size="9.5" fill="#e2e2e2" textLength="6.97" lengthAdjust="spacingAndGlyphs" >A</text>
<text x="66.45" y="82.9" font-size="8.5" fill="#e2e2e2" textLength="6.23" lengthAdjust="spacingAndGlyphs" stroke="#e2e2e2" stroke-width="0.12">B</text>
<text x="83.06" y="82.9" font-size="9" fill="#e2e2e2" font-family="Liberation Serif" textLength="3.94" lengthAdjust="spacingAndGlyphs" font-style="italic">I</text>
<text x="97.78" y="82.5" font-size="8.5" fill="#e2e2e2" textLength="6.97" lengthAdjust="spacingAndGlyphs" >U</text>
<text x="121.15" y="83" font-size="8" fill="#e2e2e2" textLength="9.71" lengthAdjust="spacingAndGlyphs" >ab</text>
<text x="138.90" y="82.9" font-size="8.5" fill="#e2e2e2" textLength="5.21" lengthAdjust="spacingAndGlyphs" >x</text>
<text x="144.73" y="85.7" font-size="5" fill="#58a6ff" textLength="3.02" lengthAdjust="spacingAndGlyphs" >2</text>
<text x="154.90" y="82.9" font-size="8.5" fill="#e2e2e2" textLength="5.21" lengthAdjust="spacingAndGlyphs" >x</text>
<text x="159.95" y="77.3" font-size="5" fill="#58a6ff" textLength="2.78" lengthAdjust="spacingAndGlyphs" >2</text>
<text x="170.05" y="84.9" font-size="11" fill="#8cc0f2" font-weight="700" textLength="9.03" lengthAdjust="spacingAndGlyphs" stroke="#2f86dc" stroke-width="0.9">A</text>
<text x="220.50" y="81.6" font-size="8.5" fill="#e2e2e2" textLength="6.47" lengthAdjust="spacingAndGlyphs" >A</text>
<text x="140.10" y="102.6" font-size="7" fill="#dcdcdc" textLength="12.52" lengthAdjust="spacingAndGlyphs" >Font</text>
<text x="303.88" y="87.3" font-size="5" fill="#3d9cf0" font-weight="700" textLength="4.46" lengthAdjust="spacingAndGlyphs" >A</text>
<text x="303.77" y="92.2" font-size="5.5" fill="#d0d0d0" textLength="4.66" lengthAdjust="spacingAndGlyphs" >Z</text>
<text x="284.01" y="102.6" font-size="7" fill="#dcdcdc" textLength="28.36" lengthAdjust="spacingAndGlyphs" >Paragraph</text>
<text x="386.82" y="75.3" font-size="8.5" fill="#141414" textLength="27.20" lengthAdjust="spacingAndGlyphs" stroke="#141414" stroke-width="0.2">Normal</text>
<text x="445.38" y="75.3" font-size="8.5" fill="#141414" textLength="40.09" lengthAdjust="spacingAndGlyphs" stroke="#141414" stroke-width="0.2">No Spacing</text>
<text x="504.08" y="76.4" font-size="12" fill="#5577bd" textLength="52.45" lengthAdjust="spacingAndGlyphs" >Heading 1</text>
<text x="457.24" y="102.6" font-size="7" fill="#dcdcdc" textLength="15.97" lengthAdjust="spacingAndGlyphs" >Styles</text>
<text x="583.91" y="78.6" font-size="8.5" fill="#e2e2e2" textLength="22.54" lengthAdjust="spacingAndGlyphs" >Editing</text>
<text x="617.91" y="79.7" font-size="8.5" fill="#e2e2e2" textLength="22.89" lengthAdjust="spacingAndGlyphs" >Dictate</text>
<text x="621.50" y="102.6" font-size="7" fill="#dcdcdc" textLength="15.77" lengthAdjust="spacingAndGlyphs" >Voice</text>
<text x="654.93" y="80" font-size="8.5" fill="#e2e2e2" textLength="18.66" lengthAdjust="spacingAndGlyphs" >Editor</text>
<text x="654.93" y="102.6" font-size="7" fill="#dcdcdc" textLength="18.66" lengthAdjust="spacingAndGlyphs" >Editor</text>
<text x="688.50" y="79.7" font-size="8.5" fill="#e2e2e2" textLength="24.25" lengthAdjust="spacingAndGlyphs" >Add-ins</text>
<text x="689.50" y="102.6" font-size="7" fill="#dcdcdc" textLength="22.23" lengthAdjust="spacingAndGlyphs" >Add-ins</text>
<text x="139.44" y="205" font-size="10.5" fill="#161616" textLength="15.62" lengthAdjust="spacingAndGlyphs" stroke="#1a1a1a" stroke-width="0.2">Use</text>
<text x="158.42" y="205" font-size="10.5" fill="#161616" textLength="24.61" lengthAdjust="spacingAndGlyphs" stroke="#1a1a1a" stroke-width="0.2">cases</text>
<text x="185.81" y="205" font-size="10.5" fill="#161616" textLength="15.58" lengthAdjust="spacingAndGlyphs" stroke="#1a1a1a" stroke-width="0.2">can</text>
<text x="203.87" y="205" font-size="10.5" fill="#161616" textLength="15.06" lengthAdjust="spacingAndGlyphs" stroke="#1a1a1a" stroke-width="0.2">get</text>
<text x="221.64" y="205" font-size="10.5" fill="#161616" textLength="27.56" lengthAdjust="spacingAndGlyphs" stroke="#1a1a1a" stroke-width="0.2">pretty</text>
<text x="252.36" y="205" font-size="10.5" fill="#161616" textLength="22.12" lengthAdjust="spacingAndGlyphs" stroke="#1a1a1a" stroke-width="0.2">wild.</text>
<text x="277.62" y="205" font-size="10.5" fill="#161616" textLength="15.76" lengthAdjust="spacingAndGlyphs" stroke="#1a1a1a" stroke-width="0.2">The</text>
<text x="295.98" y="205" font-size="10.5" fill="#161616" textLength="13.85" lengthAdjust="spacingAndGlyphs" stroke="#1a1a1a" stroke-width="0.2">Go</text>
<text x="313.02" y="205" font-size="10.5" fill="#161616" textLength="5.34" lengthAdjust="spacingAndGlyphs" stroke="#1a1a1a" stroke-width="0.2">is</text>
<text x="321.17" y="205" font-size="10.5" fill="#161616" textLength="21.67" lengthAdjust="spacingAndGlyphs" stroke="#1a1a1a" stroke-width="0.2">after</text>
<text x="345.76" y="205" font-size="10.5" fill="#161616" textLength="11.03" lengthAdjust="spacingAndGlyphs" stroke="#1a1a1a" stroke-width="0.2">all</text>
<text x="359.09" y="205" font-size="10.5" fill="#161616" textLength="5.67" lengthAdjust="spacingAndGlyphs" stroke="#1a1a1a" stroke-width="0.2">a</text>
<text x="367.70" y="205" font-size="10.5" fill="#161616" textLength="41.86" lengthAdjust="spacingAndGlyphs" stroke="#1a1a1a" stroke-width="0.2">Windows</text>
<text x="412.42" y="205" font-size="10.5" fill="#161616" textLength="10.76" lengthAdjust="spacingAndGlyphs" stroke="#1a1a1a" stroke-width="0.2">11</text>
<text x="426.12" y="205" font-size="10.5" fill="#161616" textLength="39.61" lengthAdjust="spacingAndGlyphs" stroke="#1a1a1a" stroke-width="0.2">machine</text>
<text x="222.36" y="282.5" font-size="8.5" fill="#1c1c1c" textLength="35.84" lengthAdjust="spacingAndGlyphs" >machines</text>
<text x="287.76" y="282.5" font-size="8.5" fill="#1c1c1c" textLength="49.88" lengthAdjust="spacingAndGlyphs" >machines are</text>
<text x="364.45" y="282.5" font-size="8.5" fill="#1c1c1c" textLength="40.34" lengthAdjust="spacingAndGlyphs" >machine is</text>
<text x="437.35" y="282.5" font-size="8.5" fill="#1c1c1c" textLength="39.05" lengthAdjust="spacingAndGlyphs" >machinery</text>
<text x="510.44" y="282.5" font-size="8.5" fill="#1c1c1c" textLength="37.08" lengthAdjust="spacingAndGlyphs" >machined</text>
<text x="97.47" y="320" font-size="11.5" fill="#202020" textLength="15.26" lengthAdjust="spacingAndGlyphs" >Esc</text>
<text x="151.75" y="320.5" font-size="16" fill="#202020" text-anchor="middle" >q</text>
<text x="135.90" y="306.1" font-size="9.5" fill="#444444" >1</text>
<text x="198.35" y="320.5" font-size="16" fill="#202020" text-anchor="middle" >w</text>
<text x="182.50" y="306.1" font-size="9.5" fill="#444444" >2</text>
<text x="244.95" y="320.5" font-size="16" fill="#202020" text-anchor="middle" >e</text>
<text x="229.10" y="306.1" font-size="9.5" fill="#444444" >3</text>
<text x="291.55" y="320.5" font-size="16" fill="#202020" text-anchor="middle" >r</text>
<text x="275.70" y="306.1" font-size="9.5" fill="#444444" >4</text>
<text x="338.15" y="320.5" font-size="16" fill="#202020" text-anchor="middle" >t</text>
<text x="322.30" y="306.1" font-size="9.5" fill="#444444" >5</text>
<text x="384.75" y="320.5" font-size="16" fill="#202020" text-anchor="middle" >y</text>
<text x="368.90" y="306.1" font-size="9.5" fill="#444444" >6</text>
<text x="431.35" y="320.5" font-size="16" fill="#202020" text-anchor="middle" >u</text>
<text x="415.50" y="306.1" font-size="9.5" fill="#444444" >7</text>
<text x="477.95" y="320.5" font-size="16" fill="#202020" text-anchor="middle" >i</text>
<text x="462.10" y="306.1" font-size="9.5" fill="#444444" >8</text>
<text x="524.55" y="320.5" font-size="16" fill="#202020" text-anchor="middle" >o</text>
<text x="508.70" y="306.1" font-size="9.5" fill="#444444" >9</text>
<text x="571.15" y="320.5" font-size="16" fill="#202020" text-anchor="middle" >p</text>
<text x="555.30" y="306.1" font-size="9.5" fill="#444444" >0</text>
<text x="98.09" y="366.2" font-size="10.5" fill="#202020" textLength="16.63" lengthAdjust="spacingAndGlyphs" >Tab</text>
<text x="175.05" y="366.6" font-size="16" fill="#202020" text-anchor="middle" >a</text>
<text x="221.65" y="366.6" font-size="16" fill="#202020" text-anchor="middle" >s</text>
<text x="268.25" y="366.6" font-size="16" fill="#202020" text-anchor="middle" >d</text>
<text x="314.85" y="366.6" font-size="16" fill="#202020" text-anchor="middle" >f</text>
<text x="361.45" y="366.6" font-size="16" fill="#202020" text-anchor="middle" >g</text>
<text x="408.05" y="366.6" font-size="16" fill="#202020" text-anchor="middle" >h</text>
<text x="454.65" y="366.6" font-size="16" fill="#202020" text-anchor="middle" >j</text>
<text x="501.25" y="366.6" font-size="16" fill="#202020" text-anchor="middle" >k</text>
<text x="547.85" y="366.6" font-size="16" fill="#202020" text-anchor="middle" >l</text>
<text x="594.45" y="370.3" font-size="14" fill="#202020" text-anchor="middle" >&#x27;</text>
<text x="594.45" y="352.3" font-size="7" fill="#666" text-anchor="middle" >&#x27;</text>
<text x="198.35" y="413.6" font-size="16" fill="#202020" text-anchor="middle" >z</text>
<text x="244.95" y="413.6" font-size="16" fill="#202020" text-anchor="middle" >x</text>
<text x="291.55" y="413.6" font-size="16" fill="#202020" text-anchor="middle" >c</text>
<text x="338.15" y="413.6" font-size="16" fill="#202020" text-anchor="middle" >v</text>
<text x="384.75" y="413.6" font-size="16" fill="#202020" text-anchor="middle" >b</text>
<text x="431.35" y="413.6" font-size="16" fill="#202020" text-anchor="middle" >n</text>
<text x="477.95" y="413.6" font-size="16" fill="#202020" text-anchor="middle" >m</text>
<text x="524.55" y="418.6" font-size="14" fill="#202020" text-anchor="middle" >,</text>
<text x="524.55" y="400.1" font-size="7" fill="#666" text-anchor="middle" >;</text>
<text x="571.15" y="418.6" font-size="14" fill="#202020" text-anchor="middle" >.</text>
<text x="571.15" y="400.1" font-size="7" fill="#666" text-anchor="middle" >:</text>
<text x="617.75" y="418.6" font-size="14" fill="#202020" text-anchor="middle" >?</text>
<text x="617.75" y="400.1" font-size="7" fill="#666" text-anchor="middle" >!</text>
<text x="93.13" y="460" font-size="10.5" fill="#202020" textLength="25.02" lengthAdjust="spacingAndGlyphs" >&amp;123</text>
<text x="143.03" y="460" font-size="10.5" fill="#202020" textLength="17.67" lengthAdjust="spacingAndGlyphs" >Ctrl</text>
<text x="238.40" y="460" font-size="10.5" fill="#202020" textLength="13.03" lengthAdjust="spacingAndGlyphs" >Alt</text></svg>
</body></html>
